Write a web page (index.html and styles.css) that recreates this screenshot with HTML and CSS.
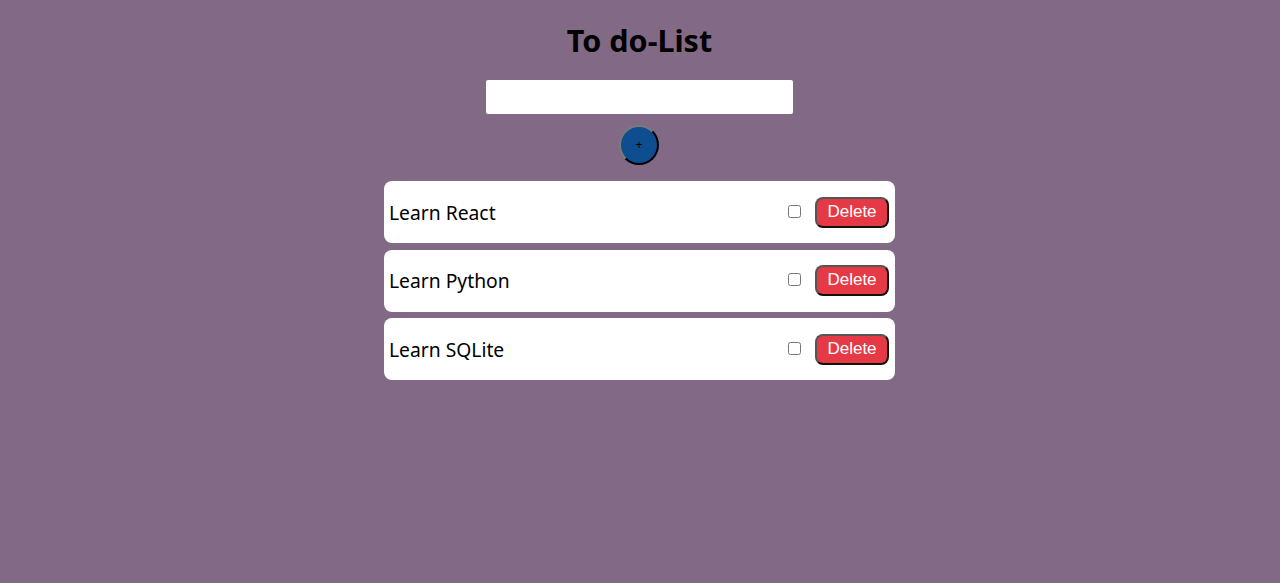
FILE: index.html
```html
<!DOCTYPE html>
<html lang="en">
<head>
  <meta charset="UTF-8" />
  <meta name="viewport" content="width=device-width, initial-scale=1" />
  <title>To do-List</title>
  <link rel="stylesheet" href="styles.css">
</head>
<body>

  <div class="app">
    <h1 class="title">To do-List</h1>

    <input type="text" class="task-input" id="taskInput" />
    <button class="add-button" id="addBtn">+</button>

    <ul class="task-list" id="taskList">
      <li class="task-item">
        <span class="task-text">Learn React</span>
        <input type="checkbox" class="task-check" />
        <button class="delete-button">Delete</button>
      </li>
      <li class="task-item">
        <span class="task-text">Learn Python</span>
        <input type="checkbox" class="task-check" />
        <button class="delete-button">Delete</button>
      </li>
      <li class="task-item">
        <span class="task-text">Learn SQLite</span>
        <input type="checkbox" class="task-check" />
        <button class="delete-button">Delete</button>
      </li>
    </ul>
  </div>

</body>
</html>
```

FILE: styles.css
```css
html, body {
  margin: 0;
  padding: 0;
  height: 100vh;
  background: #826985;
  font-family: "Noto Sans", "Open Sans", sans-serif;
  color: black;
}

/* 1. Page column */
.app {
  display: flex;
  flex-direction: column;
  align-items: center;
  padding-right: 1px;
}

.title {
  margin: 22px 0 21px;
  font-size: 30.5px;
  font-weight: bold;
  line-height: 37px;
}

/* 2. Input + add button */
.task-input {
  width: 307px;
  height: 34px;
  box-sizing: border-box;
  border: none;
  border-radius: 2px;
  outline: none;
  background: white;
  font-size: 16px;
  padding: 0 8px;
}

.add-button {
  margin-top: 11px;
  margin-right: 1px;
  width: 40px;
  height: 40px;
  border-radius: 50%;
  background: #0e4d8f;
  border: 2px outset #555;
  border-color: #7a7a7a #111 #111 #7a7a7a;
  color: black;
  font-size: 12px;
  padding: 0;
  cursor: pointer;
}

/* 3. Task list */
.task-list {
  list-style: none;
  margin: 16px 0 0;
  padding: 0;
  width: 511px;
  display: flex;
  flex-direction: column;
  gap: 6.5px;
}

.task-item {
  display: flex;
  align-items: center;
  height: 62px;
  background: white;
  border-radius: 8px;
  padding: 0 6px 0 5px;
}

.task-text {
  flex: 1;
  font-size: 19.3px;
}

.task-check {
  width: 13px;
  height: 13px;
  margin: 0 14px 2px 0;
}

.delete-button {
  width: 74px;
  height: 31px;
  background: #e63946;
  color: white;
  font-family: "Liberation Sans", Arial, sans-serif;
  font-size: 17px;
  border: 2px solid #222;
  border-color: #555 #111 #111 #555;
  border-radius: 8px;
  padding: 0 0 1px;
  cursor: pointer;
}
```
